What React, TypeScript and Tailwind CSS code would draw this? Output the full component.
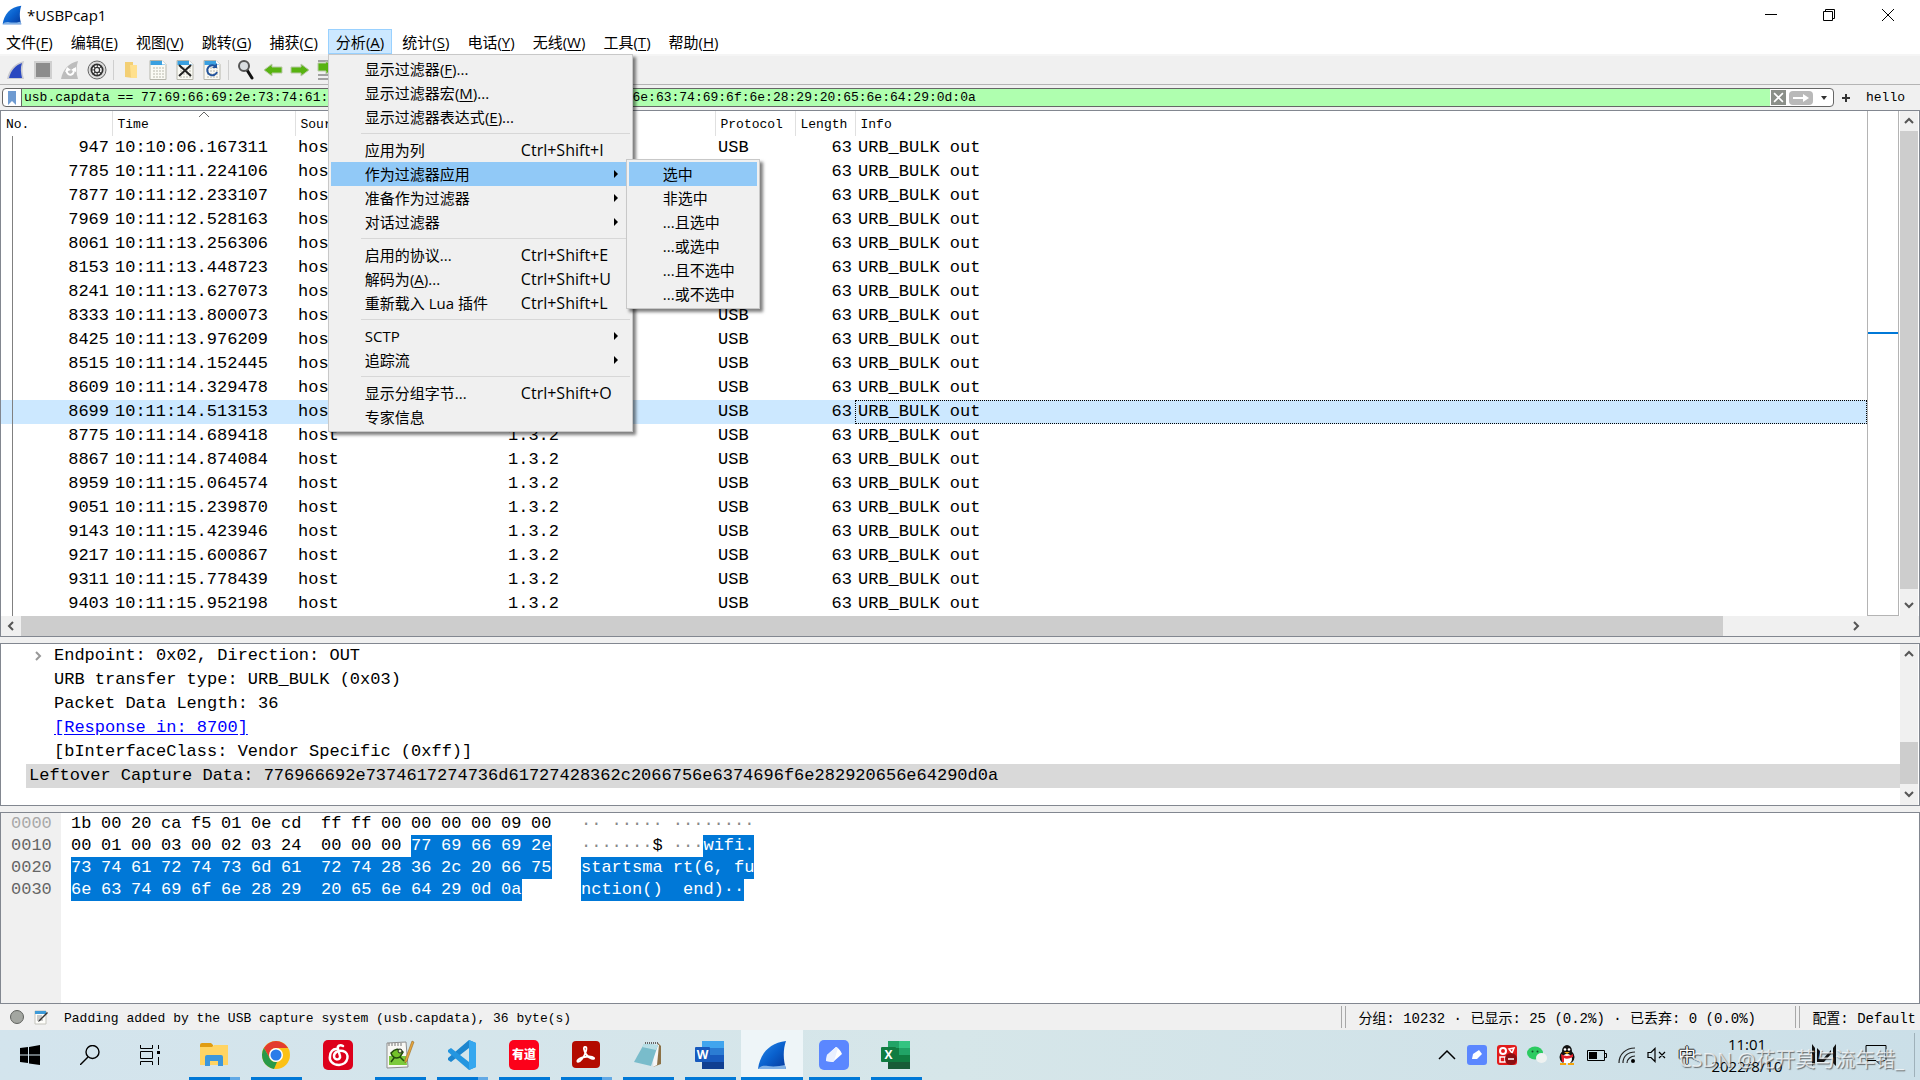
import { useId, useState } from "react";
import type { ReactNode } from "react";
import clsx from "clsx";

type MenuEntry = {
  label?: string;
  accel?: string;
  tail?: string;
  shortcut?: string;
  submenu?: boolean;
  active?: boolean;
  separator?: boolean;
};

const MENUS = [
  ["文件", "F"],
  ["编辑", "E"],
  ["视图", "V"],
  ["跳转", "G"],
  ["捕获", "C"],
  ["分析", "A"],
  ["统计", "S"],
  ["电话", "Y"],
  ["无线", "W"],
  ["工具", "T"],
  ["帮助", "H"],
];

const ANALYZE_MENU: MenuEntry[] = [
  { label: "显示过滤器", accel: "F", tail: "..." },
  { label: "显示过滤器宏", accel: "M", tail: "..." },
  { label: "显示过滤器表达式", accel: "E", tail: "..." },
  { separator: true },
  { label: "应用为列", shortcut: "Ctrl+Shift+I" },
  { label: "作为过滤器应用", submenu: true, active: true },
  { label: "准备作为过滤器", submenu: true },
  { label: "对话过滤器", submenu: true },
  { separator: true },
  { label: "启用的协议...", shortcut: "Ctrl+Shift+E" },
  { label: "解码为", accel: "A", tail: "...", shortcut: "Ctrl+Shift+U" },
  { label: "重新载入 Lua 插件", shortcut: "Ctrl+Shift+L" },
  { separator: true },
  { label: "SCTP", submenu: true },
  { label: "追踪流", submenu: true },
  { separator: true },
  { label: "显示分组字节...", shortcut: "Ctrl+Shift+O" },
  { label: "专家信息" },
];

const APPLY_MENU = ["选中", "非选中", "...且选中", "...或选中", "...且不选中", "...或不选中"];

const PACKETS: [number, string][] = [
  [947, "10:10:06.167311"],
  [7785, "10:11:11.224106"],
  [7877, "10:11:12.233107"],
  [7969, "10:11:12.528163"],
  [8061, "10:11:13.256306"],
  [8153, "10:11:13.448723"],
  [8241, "10:11:13.627073"],
  [8333, "10:11:13.800073"],
  [8425, "10:11:13.976209"],
  [8515, "10:11:14.152445"],
  [8609, "10:11:14.329478"],
  [8699, "10:11:14.513153"],
  [8775, "10:11:14.689418"],
  [8867, "10:11:14.874084"],
  [8959, "10:11:15.064574"],
  [9051, "10:11:15.239870"],
  [9143, "10:11:15.423946"],
  [9217, "10:11:15.600867"],
  [9311, "10:11:15.778439"],
  [9403, "10:11:15.952198"],
];

const FILTER =
  "usb.capdata == 77:69:66:69:2e:73:74:61:72:74:73:6d:61:72:74:28:36:2c:20:66:75:6e:63:74:69:6f:6e:28:29:20:65:6e:64:29:0d:0a";

// bytes from selFrom on belong to the selected field
const HEX_ROWS = [
  { offset: "0000", bytes: "1b 00 20 ca f5 01 0e cd ff ff 00 00 00 00 09 00", selFrom: 16, dots: "·· ····· ········", text: "", dots2: "", ascii: "" },
  { offset: "0010", bytes: "00 01 00 03 00 02 03 24 00 00 00 77 69 66 69 2e", selFrom: 11, dots: "·······", text: "$ ", dots2: "···", ascii: "wifi." },
  { offset: "0020", bytes: "73 74 61 72 74 73 6d 61 72 74 28 36 2c 20 66 75", selFrom: 0, dots: "", text: "", dots2: "", ascii: "startsma rt(6, fu" },
  { offset: "0030", bytes: "6e 63 74 69 6f 6e 28 29 20 65 6e 64 29 0d 0a", selFrom: 0, dots: "", text: "", dots2: "", ascii: "nction()  end)··" },
];

const MONO = "font-['Liberation_Mono','Noto_Sans_CJK_SC',monospace]";

function Fin({ className }: { className?: string }) {
  const id = useId();
  return (
    <svg viewBox="0 0 30 30" className={className} aria-hidden="true">
      <defs>
        <linearGradient id={id} x1="0" y1="0" x2="1" y2="1">
          <stop offset="0" stopColor="#2f8fe8" />
          <stop offset="0.5" stopColor="#0a62cf" />
          <stop offset="1" stopColor="#06389b" />
        </linearGradient>
      </defs>
      <path d="M1 29C3 14 12 3 29 1c-3 8-3 19 0 28z" fill={`url(#${id})`} />
      <path d="M1 29c2-3 6-4 10-3 6 1 12 0 17-1l1 4z" fill="#7fb0e6" />
    </svg>
  );
}

function Chevron({ dir, className }: { dir: "up" | "down" | "left" | "right"; className?: string }) {
  const paths = {
    up: "M1 7l4-4 4 4",
    down: "M1 3l4 4 4-4",
    left: "M7 1L3 5l4 4",
    right: "M3 1l4 4-4 4",
  };
  return (
    <svg viewBox="0 0 10 10" className={clsx("size-[10px]", className)} aria-hidden="true">
      <path d={paths[dir]} fill="none" stroke="#555" strokeWidth="2" />
    </svg>
  );
}

function ToolButton({ label, children }: { label: string; children: ReactNode }) {
  return (
    <button aria-label={label} className="flex h-6 w-[27px] shrink-0 items-center justify-center">
      <svg viewBox="0 0 20 20" className="size-5">
        {children}
      </svg>
    </button>
  );
}

function DocBase() {
  return (
    <>
      <path d="M2 .5h12l4 4v15H2z" fill="#fafaf4" stroke="#b6b6ac" />
      <path d="M2.500 1h11.500l3.500 4h-15z" fill="#3aa0e0" />
      <path d="M14 .5l4 4h-4z" fill="#fff" />
      <path d="M5 8h11M5 11h11M5 14h11M5 17h11" stroke="#b8b8ac" strokeDasharray="2 1" />
    </>
  );
}

function Toolbar() {
  return (
    <div className="flex h-[29px] items-center border-b border-[#b4b4b4] bg-[#f0f0f0] pl-0.5">
      <ToolButton label="开始捕获分组">
        <path d="M1 19C3 9 9 3 18 1c-2 6-2 12 0 18z" fill="#c9cad0" />
        <path d="M3 18C5 10 10 5 16 3c-2 5-1 10 0 15z" fill="#2a48c0" />
      </ToolButton>
      <ToolButton label="停止捕获分组">
        <path d="M1 1h18v18H1z" fill="#d0d0d0" />
        <path d="M3 3h14v14H3z" fill="#8c8c8c" />
      </ToolButton>
      <ToolButton label="重新开始当前捕获">
        <path d="M1 19C3 9 9 3 18 1c-2 6-2 12 0 18z" fill="#bdbdbd" />
        <path d="M13 9a3.500 3.500 0 1 1-6 1" fill="none" stroke="#fff" strokeWidth="2" />
        <path d="M5 12l2-5 4 3zM11 10l5-3v5z" fill="#fff" />
      </ToolButton>
      <ToolButton label="捕获选项">
        <circle cx="10" cy="10" r="9" fill="#dcdcdc" stroke="#666" />
        <circle cx="10" cy="10" r="6.500" fill="#2f2f2f" />
        <circle cx="10" cy="10" r="4" fill="none" stroke="#fff" strokeWidth="1.500" strokeDasharray="2.200 1" />
        <circle cx="10" cy="10" r="2" fill="#eee" />
      </ToolButton>
      <span className="mx-[3px] h-5 w-px bg-[#cfcfcf]" />
      <ToolButton label="打开">
        <path d="M4 2h8v16l-8-1z" fill="#f3cf74" />
        <path d="M9 5h7v13h-6z" fill="#ffe08e" />
      </ToolButton>
      <ToolButton label="保存">
        <DocBase />
      </ToolButton>
      <ToolButton label="关闭">
        <DocBase />
        <path d="M4 5l12 11M16 5L4 16" stroke="#222" strokeWidth="2" />
      </ToolButton>
      <ToolButton label="重新加载">
        <DocBase />
        <path d="M14 7a5 5 0 1 0 1 5" fill="none" stroke="#23549c" strokeWidth="2" />
        <path d="M10 8h5V3z" fill="#23549c" />
      </ToolButton>
      <span className="mx-[3px] h-5 w-px bg-[#cfcfcf]" />
      <ToolButton label="查找分组">
        <path d="M11 10l5 8" stroke="#111" strokeWidth="3" strokeLinecap="round" />
        <circle cx="8" cy="6" r="5" fill="#d9dde0" stroke="#555" strokeWidth="2" />
      </ToolButton>
      <ToolButton label="前一分组">
        <path d="M1 10l8-6v3h10v6H9v3z" fill="#58b311" stroke="#b9c9a9" />
      </ToolButton>
      <ToolButton label="后一分组">
        <path d="M19 10l-8-6v3H1v6h10v3z" fill="#58b311" stroke="#b9c9a9" />
      </ToolButton>
      <ToolButton label="转到分组">
        <path d="M1 1h15M1 15h18M1 19h18" stroke="#555" />
        <path d="M1 3h8V1l9 7-9 6v-3H1z" fill="#58b311" stroke="#b9c9a9" />
      </ToolButton>
    </div>
  );
}

function MenuLabel({ entry }: { entry: MenuEntry }) {
  return (
    <span>
      {entry.label}
      {entry.accel && (
        <>
          (<u className="underline-offset-2">{entry.accel}</u>)
        </>
      )}
      {entry.tail}
    </span>
  );
}

function AnalyzeMenu() {
  return (
    <div className="absolute left-0 top-full z-10 w-[305px] border border-[#c8c8c8] bg-[#f0f0f0] p-0.5 shadow-[3px_3px_3px_rgba(0,0,0,0.5)]">
      {ANALYZE_MENU.map((entry, i) =>
        entry.separator ? (
          <div key={i} className="ml-[30px] flex h-[9px] items-center">
            <div className="h-px w-full bg-[#d7d7d7]" />
          </div>
        ) : (
          <div key={i} className="relative">
            <button
              className={clsx(
                "flex h-6 w-full items-center pl-[34px] pr-3 text-left whitespace-nowrap",
                entry.active && "bg-[#91c9f7]"
              )}
            >
              <span className="w-[156px]">
                <MenuLabel entry={entry} />
              </span>
              <span className="flex-1 text-[16px]">{entry.shortcut}</span>
              {entry.submenu && (
                <svg viewBox="0 0 4 8" className="h-2 w-1" aria-hidden="true">
                  <path d="M0 0l4 4-4 4z" />
                </svg>
              )}
            </button>
            {entry.active && <ApplyMenu />}
          </div>
        )
      )}
    </div>
  );
}

function ApplyMenu() {
  return (
    <div className="absolute -top-[3px] left-[295px] z-20 w-[134px] border border-[#c8c8c8] bg-[#f0f0f0] p-0.5 shadow-[3px_3px_3px_rgba(0,0,0,0.5)]">
      {APPLY_MENU.map((label, i) => (
        <button
          key={label}
          className={clsx("flex h-6 w-full items-center pl-[34px] whitespace-nowrap", i === 0 && "bg-[#91c9f7]")}
        >
          {label}
        </button>
      ))}
    </div>
  );
}

function MenuBar() {
  return (
    <nav className="-ml-0.5 flex h-[25px] gap-0.5 text-[15px] leading-5">
      {MENUS.map(([label, accel]) => {
        const open = accel === "A";
        return (
          <div key={accel} className="relative">
            <button
              className={clsx(
                "flex h-[25px] items-center border px-[7px] whitespace-nowrap",
                open ? "border-[#99d1ff] bg-[#cce8ff]" : "border-transparent"
              )}
            >
              <MenuLabel entry={{ label, accel }} />
            </button>
            {open && <AnalyzeMenu />}
          </div>
        );
      })}
    </nav>
  );
}

function FilterBar() {
  const [value, setValue] = useState(FILTER);
  return (
    <div className={clsx("flex h-[25px] items-center gap-2 bg-[#f0f0f0] px-0.5 text-[13px]", MONO)}>
      <div className="flex h-[19px] flex-1 items-center rounded-sm border border-[#666] bg-white">
        <button aria-label="书签" className="flex w-[18px] justify-center">
          <svg viewBox="0 0 10 14" className="h-3.5 w-2.5">
            <path d="M1 0h8v14l-4-4-4 4z" fill="#6f9bd1" />
          </svg>
        </button>
        <input
          aria-label="显示过滤器"
          value={value}
          onChange={(e) => setValue(e.target.value)}
          className="h-[17px] min-w-0 flex-1 border-l border-[#666] bg-[#afffaf] px-0.5 outline-none"
        />
        <button aria-label="清除" className="mx-px flex size-[15px] items-center justify-center bg-[#8b8f89]">
          <svg viewBox="0 0 10 10" className="size-[11px]">
            <path d="M1 1l8 8M9 1L1 9" stroke="#fff" strokeWidth="1.500" />
          </svg>
        </button>
        <button aria-label="应用" className="mx-0.5 flex h-[14px] w-6 items-center justify-center rounded-sm bg-[#b9b9b9]">
          <svg viewBox="0 0 16 8" className="h-2 w-4">
            <path d="M0 3h10V0l6 4-6 4V5H0z" fill="#fff" />
          </svg>
        </button>
        <button aria-label="历史" className="flex w-[18px] justify-center">
          <svg viewBox="0 0 6 4" className="h-1 w-1.5">
            <path d="M0 0h6L3 4z" fill="#333" />
          </svg>
        </button>
      </div>
      <button aria-label="添加" className="flex w-2">
        <svg viewBox="0 0 8 8" className="size-2">
          <path d="M0 4h8M4 0v8" stroke="#333" strokeWidth="2" />
        </svg>
      </button>
      <button className="w-[60px] pl-2 text-left">hello</button>
    </div>
  );
}

function VScroll({ before, thumb, after }: { before: string; thumb: string; after: string }) {
  return (
    <div className="mr-px flex w-[18px] shrink-0 flex-col items-center bg-[#f0f0f0]">
      <Chevron dir="up" className="my-[5px] shrink-0" />
      <div className={before} />
      <div className={clsx("w-full bg-[#cdcdcd]", thumb)} />
      <Chevron dir="down" className={clsx("mb-[6px] shrink-0", after)} />
    </div>
  );
}

function PacketList() {
  const head = "border-r border-[#e0e0e0] pt-0.5 pl-[5px] text-left font-normal";
  return (
    <section className="border border-[#828790] bg-white">
      <div className="flex">
        <table className="w-0 flex-1 table-fixed border-collapse">
          <colgroup>
            <col className="w-[111px]" />
            <col className="w-[183px]" />
            <col className="w-[210px]" />
            <col className="w-[210px]" />
            <col className="w-20" />
            <col className="w-[60px]" />
            <col />
          </colgroup>
          <thead>
            <tr className={clsx("h-[25px] text-[13px]", MONO)}>
              <th className={head}>No.</th>
              <th className={clsx(head, "relative")}>
                Time
                <svg
                  viewBox="0 0 10 5"
                  className="absolute top-px left-1/2 h-[5px] w-[10px] -translate-x-1/2"
                  aria-hidden="true"
                >
                  <path d="M0 5l5-5 5 5" fill="none" stroke="#666" />
                </svg>
              </th>
              <th className={head}>Source</th>
              <th className={head}>Destination</th>
              <th className={head}>Protocol</th>
              <th className={head}>Length</th>
              <th className="pt-0.5 pl-[5px] text-left font-normal">Info</th>
            </tr>
          </thead>
          <tbody className={clsx("text-[17px] leading-6", MONO)}>
            {PACKETS.map(([no, time]) => {
              const selected = no === 8699;
              return (
                <tr key={no} className={clsx("h-6 whitespace-pre", selected && "bg-[#cce8ff]")}>
                  <td className="py-0 pl-[11px]">
                    <div className="border-l border-[#808080] pr-[3px] text-right">{no}</div>
                  </td>
                  <td className="py-0 pl-[3px]">{time}</td>
                  <td className="py-0 pl-[3px]">host</td>
                  <td className="py-0 pl-[3px]">1.3.2</td>
                  <td className="py-0 pl-[3px]">USB</td>
                  <td className="py-0 pr-[3px] text-right">63</td>
                  <td
                    className={clsx(
                      "py-0 pl-[3px]",
                      selected && "outline outline-dotted -outline-offset-1 outline-black"
                    )}
                  >
                    URB_BULK out
                  </td>
                </tr>
              );
            })}
          </tbody>
        </table>
        <div className="mr-px w-8 shrink-0 border border-t-0 border-[#b4b4b4] pt-[221px]">
          <div className="h-0.5 bg-[#0078d7]" />
        </div>
        <VScroll before="h-0" thumb="flex-1" after="mt-[11px]" />
      </div>
      <div className="flex h-5 items-center bg-[#f0f0f0] pr-[58px]">
        <Chevron dir="left" className="mx-[5px] shrink-0" />
        <div className="flex flex-1">
          <div className="h-5 w-[93%] bg-[#cdcdcd]" />
        </div>
        <Chevron dir="right" className="shrink-0" />
      </div>
    </section>
  );
}

function PacketDetails() {
  return (
    <section className="flex border border-[#828790] bg-white">
      <div className={clsx("flex-1 pb-[17px] pl-[25px] text-[17px] leading-6 whitespace-pre", MONO)}>
        <div className="relative pl-7">
          <Chevron dir="right" className="absolute top-[7px] left-[7px] opacity-60" />
          Endpoint: 0x02, Direction: OUT
        </div>
        <div className="pl-7">URB transfer type: URB_BULK (0x03)</div>
        <div className="pl-7">Packet Data Length: 36</div>
        <div className="pl-7">
          <a href="#8700" className="text-[#0000ff] underline underline-offset-2">
            [Response in: 8700]
          </a>
        </div>
        <div className="pl-7">[bInterfaceClass: Vendor Specific (0xff)]</div>
        <div className="bg-[#d9d9d9] pl-[3px]">
          Leftover Capture Data: 776966692e7374617274736d61727428362c2066756e6374696f6e282920656e64290d0a
        </div>
      </div>
      <VScroll before="flex-1" thumb="h-[42px]" after="mt-[5px]" />
    </section>
  );
}

function HexBytes({ bytes, selFrom }: { bytes: string; selFrom: number }) {
  const list = bytes.split(" ");
  return (
    <div className="flex w-[510px]">
      {list.map((byte, i) => (
        <span
          key={i}
          className={clsx(
            i === list.length - 1 ? "w-[21px]" : i === 7 ? "w-10" : "w-[30px]",
            i >= selFrom && "bg-[#0078d7] text-white"
          )}
        >
          {byte}
        </span>
      ))}
    </div>
  );
}

function HexDump() {
  return (
    <section className="flex flex-1 border border-[#828790] bg-white">
      <div className={clsx("w-[60px] bg-[#f0f0f0] pl-2.5 text-[17px] leading-[22px] text-[#666]", MONO)}>
        {HEX_ROWS.map((row, i) => (
          <div key={row.offset} className={clsx(i === 0 && "text-[#a8a8a8]")}>
            {row.offset}
          </div>
        ))}
      </div>
      <div className={clsx("pl-2.5 text-[17px] leading-[22px] whitespace-pre", MONO)}>
        {HEX_ROWS.map((row) => (
          <div key={row.offset} className="flex">
            <HexBytes bytes={row.bytes} selFrom={row.selFrom} />
            <div>
              <span className="text-[#888]">{row.dots}</span>
              {row.text}
              <span className="text-[#888]">{row.dots2}</span>
              {row.ascii && <span className="inline-block bg-[#0078d7] text-white">{row.ascii}</span>}
            </div>
          </div>
        ))}
      </div>
    </section>
  );
}

function Grip() {
  return <span className="h-[22px] w-[5px] shrink-0 border-x border-[#a8a8a8]" />;
}

function StatusBar() {
  return (
    <footer className={clsx("flex h-[26px] items-center bg-[#f0f0f0] pr-1 text-[14px] whitespace-pre", MONO)}>
      <button aria-label="专家信息" className="ml-2.5">
        <svg viewBox="0 0 14 14" className="size-3.5">
          <circle cx="7" cy="7" r="6.500" fill="#a3a6a1" stroke="#5e605d" />
        </svg>
      </button>
      <button aria-label="捕获文件注释" className="ml-2.5">
        <svg viewBox="0 0 15 15" className="size-[15px]">
          <path d="M1 1h11v13H1z" fill="#fdfdfa" stroke="#c4c4bd" />
          <path d="M1 1h11v3H1z" fill="#3d9ad8" />
          <path d="M3 6h5M3 8h5M3 10h6" stroke="#999" />
          <path d="M5 10l8-8 1 1-8 8-2 1z" fill="#333" />
        </svg>
      </button>
      <span className="ml-[15px] flex-1 pt-1 text-[13px]">
        Padding added by the USB capture system (usb.capdata), 36 byte(s)
      </span>
      <Grip />
      <span className="w-[449px] pt-1 pl-3">分组: 10232 · 已显示: 25 (0.2%) · 已丢弃: 0 (0.0%)</span>
      <Grip />
      <span className="pt-1 pl-3">配置: Default</span>
    </footer>
  );
}

const TASKS: { name: string; running?: boolean; stacked?: boolean; active?: boolean; icon: ReactNode }[] = [
  {
    name: "文件资源管理器",
    running: true,
    stacked: true,
    icon: (
      <>
        <path d="M1 5q0-2 2-2h9l2 2v4H1z" fill="#e09c12" />
        <path d="M1 7h12l2-2h14v20H1z" fill="#ffd463" />
        <path d="M6 26V17q0-2 2-2h14q2 0 2 2v9h-5v-5h-8v5z" fill="#3c97dc" />
      </>
    ),
  },
  {
    name: "Chrome",
    running: true,
    icon: (
      <>
        <circle cx="15" cy="15" r="14" fill="#fbc116" />
        <path d="M2.900 8A14 14 0 0 1 27.100 8H15a7 7 0 0 0-6.100 3.500L9 18.500z" fill="#e33b2e" />
        <path d="M2.900 8l6.100 10.500A7 7 0 0 0 16 22l-3 6.900A14 14 0 0 1 2.900 8z" fill="#299a48" />
        <circle cx="15" cy="15" r="7" fill="#fff" />
        <circle cx="15" cy="15" r="5.500" fill="#2a7de9" />
      </>
    ),
  },
  {
    name: "网易云音乐",
    icon: (
      <>
        <rect width="30" height="30" rx="5" fill="#dd001b" />
        <path
          d="M20 6c-3-2-6 0-5 3l2 7c1 4-6 5-6 0 0-4 5-6 9-5 7 2 6 13-4 14-7 0-10-5-9-9 0-4 3-7 6-7"
          fill="none"
          stroke="#fff"
          strokeWidth="2.500"
          strokeLinecap="round"
        />
      </>
    ),
  },
  {
    name: "Notepad++",
    running: true,
    icon: (
      <>
        <path d="M2 3l19-1 2 25-21 1z" fill="#f8f8f4" stroke="#8d8d8d" />
        <path d="M4 16h17l1 9H4z" fill="#7cca3c" />
        <path d="M4 3v3M7 3v3M10 3v3M13 3v3M16 3v3" stroke="#777" />
        <path d="M6 13q6-7 12-1l-3 5q-7 3-9-4zM9 18l-3 4M15 17l4 4" fill="#74c22a" stroke="#234b0c" strokeWidth="1.500" />
        <circle cx="15" cy="11" r="2" fill="#dff5b9" stroke="#222" />
        <path d="M20 20L27 1l2 1-7 19-2 2z" fill="#e5a53c" stroke="#8b5a14" strokeWidth=".5" />
      </>
    ),
  },
  {
    name: "Visual Studio Code",
    running: true,
    stacked: true,
    icon: (
      <>
        <path d="M22 0l7 3v24l-7 3V8L4 22l-3-2v-2z" fill="#1d86cf" />
        <path d="M22 30L1 12v-2l3-2 18 14z" fill="#2496e0" />
        <path d="M22 0l7 3v24l-7 3z" fill="#35a7ef" />
      </>
    ),
  },
  {
    name: "有道",
    running: true,
    icon: (
      <>
        <rect width="30" height="30" rx="5" fill="#fc011a" />
        <text x="15" y="19" textAnchor="middle" fontSize="12" fontWeight="900" fill="#fff" fontFamily="Noto Sans CJK SC">
          有道
        </text>
      </>
    ),
  },
  {
    name: "Acrobat",
    running: true,
    stacked: true,
    icon: (
      <>
        <rect x="1" y="1" width="28" height="27" rx="4" fill="#b30b00" />
        <path
          d="M14 7c3-1 1 7-3 12-3 4-6 3-4 1 3-3 13-5 16-2 1 2-5 1-8-4-2-3-3-7-1-7z"
          fill="none"
          stroke="#fff"
          strokeWidth="1.800"
        />
      </>
    ),
  },
  {
    name: "记事本",
    running: true,
    icon: (
      <>
        <path d="M25 3l3 3v18l-8 3z" fill="#8c7146" />
        <path d="M21 4l5 1-2 20-4 2z" fill="#f6f6f6" />
        <path d="M11 4l14 1-7 21-17-4z" fill="#79bccb" />
        <path d="M11 4l14 1-2 5-14-3z" fill="#b9dfe6" />
        <path d="M12 3h13" stroke="#666" strokeWidth="2" strokeDasharray="1 1" />
      </>
    ),
  },
  {
    name: "Word",
    running: true,
    icon: (
      <>
        <path d="M7 1h22v7H7z" fill="#41a5ee" />
        <path d="M7 8h22v7H7z" fill="#2b7cd3" />
        <path d="M7 15h22v7H7z" fill="#185abd" />
        <path d="M7 22h22v7H7z" fill="#103f91" />
        <rect y="7" width="15" height="15" rx="1" fill="#185abd" />
        <text x="7.500" y="19" textAnchor="middle" fontSize="12" fontWeight="700" fill="#fff" fontFamily="Open Sans">
          W
        </text>
      </>
    ),
  },
  { name: "Wireshark", running: true, active: true, icon: null },
  {
    name: "画笔",
    running: true,
    icon: (
      <>
        <rect width="30" height="30" rx="5" fill="#5b87ff" />
        <path d="M7 21l1-6 9-8q4 2 6 7l-9 8z" fill="#fff" />
        <path d="M8 15l9-8 2 1-4 13-1 1-7-1z" fill="#eaf0ff" />
      </>
    ),
  },
  {
    name: "Excel",
    running: true,
    icon: (
      <>
        <path d="M7 1h11v7H7z" fill="#21a366" />
        <path d="M18 1h11v7H18z" fill="#33c481" />
        <path d="M7 8h11v7H7z" fill="#107c41" />
        <path d="M18 8h11v7H18z" fill="#21a366" />
        <path d="M7 15h22v7H7z" fill="#107c41" />
        <path d="M7 22h22v7H7z" fill="#185c37" />
        <rect y="7" width="15" height="15" rx="1" fill="#107c41" />
        <text x="7.500" y="19" textAnchor="middle" fontSize="12" fontWeight="700" fill="#fff" fontFamily="Open Sans">
          X
        </text>
      </>
    ),
  },
];

function TrayIcon({ label, children }: { label: string; children: ReactNode }) {
  return (
    <button aria-label={label} className="flex w-[30px] shrink-0 justify-center">
      <svg viewBox="0 0 20 20" className="size-5">
        {children}
      </svg>
    </button>
  );
}

function Taskbar() {
  return (
    <div className="relative flex h-[50px] bg-linear-to-r from-[#d3e4ed] via-[#d6e6e9] to-[#cbdfe8]">
      <button aria-label="开始" className="flex w-[60px] items-center justify-center">
        <svg viewBox="0 0 20 20" className="size-5">
          <path d="M0 3l8-1v7.500H0zM9 2l11-2v9.500H9zM0 10.500h8V18l-8-1zM9 10.500h11V20L9 18.500z" />
        </svg>
      </button>
      <button aria-label="搜索" className="flex w-[60px] items-center justify-center">
        <svg viewBox="0 0 20 20" className="size-5">
          <circle cx="12.500" cy="7" r="6.500" fill="none" stroke="#000" strokeWidth="1.400" />
          <path d="M8 12l-8 8" stroke="#000" strokeWidth="1.400" />
        </svg>
      </button>
      <button aria-label="任务视图" className="mr-[3px] flex w-[60px] items-center justify-center">
        <svg viewBox="0 0 20 20" className="size-5">
          <path d="M.5 0v3.500h12V0M.5 20v-3.500h12V20M.5 6.500h12v7H.5zM18.500 0v4M18.500 12v8" fill="none" stroke="#000" />
          <path d="M17 6h3v3h-3z" />
        </svg>
      </button>
      {TASKS.map((task) => (
        <button
          key={task.name}
          aria-label={task.name}
          className={clsx("flex w-[62px] flex-col items-center", task.active && "bg-[#eef5f8]")}
        >
          <span className="flex h-[47px] items-center pt-[3px]">
            {task.active ? (
              <Fin className="size-[30px]" />
            ) : (
              <svg viewBox="0 0 30 30" className="size-[30px]">
                {task.icon}
              </svg>
            )}
          </span>
          {task.running && (
            <span className={clsx("flex h-[3px] bg-[#0078d7]", task.active ? "w-full" : "w-[51px]")}>
              {task.stacked && <span className="ml-auto h-full w-2.5 bg-[#62a9e5]" />}
            </span>
          )}
        </button>
      ))}
      <div className="ml-auto flex items-center">
        <TrayIcon label="显示隐藏的图标">
          <path d="M2 14l8-8 8 8" fill="none" stroke="#000" strokeWidth="1.500" />
        </TrayIcon>
        <TrayIcon label="画笔">
          <rect width="20" height="20" rx="3" fill="#5b87ff" />
          <path d="M5 14l1-5 6-4 3 4-5 5z" fill="#fff" />
        </TrayIcon>
        <TrayIcon label="录屏">
          <rect width="20" height="20" rx="3" fill="#e21b1b" />
          <circle cx="6" cy="6" r="3" fill="none" stroke="#fff" strokeWidth="2" />
          <path d="M12 4l5-1-2 5zM3 12h5v5H3z" fill="none" stroke="#fff" strokeWidth="1.500" />
          <circle cx="14" cy="14" r="6" fill="#8d0f12" />
          <path d="M11 14h6" stroke="#fff" strokeWidth="1.500" />
        </TrayIcon>
        <TrayIcon label="微信">
          <ellipse cx="8" cy="8" rx="8" ry="6.500" fill="#2ccb61" />
          <ellipse cx="14.500" cy="13" rx="5.500" ry="5" fill="#eef2f1" />
          <circle cx="5.500" cy="6.500" r="1" fill="#14552b" />
          <circle cx="10.500" cy="6.500" r="1" fill="#14552b" />
        </TrayIcon>
        <TrayIcon label="QQ">
          <ellipse cx="10" cy="12" rx="7.500" ry="7" fill="#111" />
          <ellipse cx="10" cy="6" rx="5" ry="6" fill="#111" />
          <ellipse cx="10" cy="14" rx="5" ry="5" fill="#fff" />
          <path d="M4 9q6 4 12 0v3q-6 3-9 1v4H5z" fill="#e3202b" />
          <path d="M3 18h6v2H3zM11 18h6v2h-6zM7 7h6l-3 2z" fill="#f5a60b" />
          <circle cx="8" cy="4.500" r="1.300" fill="#fff" />
          <circle cx="12" cy="4.500" r="1.300" fill="#fff" />
        </TrayIcon>
        <TrayIcon label="电池">
          <path d="M.5 5.500h17v10H.5zM18 8.500h1.500v4H18" fill="none" stroke="#000" />
          <path d="M2 7h8v7H2z" />
        </TrayIcon>
        <TrayIcon label="网络">
          <path d="M2 18C2 9 9 3 18 3M6 18c0-7 5-11 12-11M10 18c0-4 4-7 8-7" fill="none" stroke="#222" strokeWidth="1.200" />
          <circle cx="16" cy="16" r="2" />
        </TrayIcon>
        <TrayIcon label="音量">
          <path d="M1 7.500h3l4-4v13l-4-4H1zM12 7l6 6M18 7l-6 6" fill="none" stroke="#000" strokeWidth="1.200" />
        </TrayIcon>
        <button className="w-[30px] text-[18px] leading-6 text-white [text-shadow:1px_0_#222,-1px_0_#222,0_1px_#222,0_-1px_#222]">
          中
        </button>
        <button className="flex w-[90px] flex-col items-center text-[15px] leading-[22px]">
          <span>11:01</span>
          <span>2022/8/10</span>
        </button>
        <button aria-label="输入法" className="flex w-16 justify-center">
          <svg viewBox="0 0 28 24" className="h-6 w-7">
            <path d="M2 1l3 4v15l-3 3zM26 1l-3 4v15l3 3zM7 5l3 3v8h3l8-9v4l-7 8H7z" fill="#111" />
          </svg>
        </button>
        <button aria-label="通知" className="mr-[18px] flex w-10 justify-center">
          <svg viewBox="0 0 22 22" className="size-[22px]">
            <path d="M1 1.500h20v15h-6v4l-4-4H1z" fill="none" stroke="#000" />
          </svg>
        </button>
        <span className="mr-[5px] h-11 w-px bg-[#9fb1ba]" />
      </div>
      <span className="pointer-events-none absolute right-4 bottom-1 text-[20px] leading-8 whitespace-nowrap text-white/70 [text-shadow:1px_1px_1px_rgba(60,60,60,0.7)]">
        CSDN @花开莫与流年错_
      </span>
    </div>
  );
}

function TitleBar() {
  return (
    <header className="flex h-[29px] items-center pl-0.5">
      <Fin className="size-5" />
      <h1 className="ml-[5px] flex-1 text-[15px] leading-5">*USBPcap1</h1>
      <button aria-label="最小化" className="flex w-[58px] justify-center">
        <svg viewBox="0 0 12 12" className="size-3">
          <path d="M0 5.500h12" stroke="#000" />
        </svg>
      </button>
      <button aria-label="还原" className="flex w-[58px] justify-center">
        <svg viewBox="0 0 12 12" className="size-3">
          <path d="M.5 2.500h9v9h-9zM2.500 2.500v-2h9v9h-2" fill="none" stroke="#000" />
        </svg>
      </button>
      <button aria-label="关闭" className="mr-0.5 flex w-[60px] justify-center">
        <svg viewBox="0 0 12 12" className="size-3">
          <path d="M0 0l12 12M12 0L0 12" stroke="#000" />
        </svg>
      </button>
    </header>
  );
}

export default function App() {
  return (
    <div className="flex min-h-screen flex-col bg-[#f0f0f0] font-['Open_Sans','Noto_Sans_CJK_SC',sans-serif] text-black">
      <div className="border-b-2 border-[#f5f5f5] bg-white">
        <TitleBar />
        <MenuBar />
      </div>
      <Toolbar />
      <FilterBar />
      <main className="flex flex-1 flex-col gap-1.5">
        <PacketList />
        <PacketDetails />
        <HexDump />
      </main>
      <StatusBar />
      <Taskbar />
    </div>
  );
}
